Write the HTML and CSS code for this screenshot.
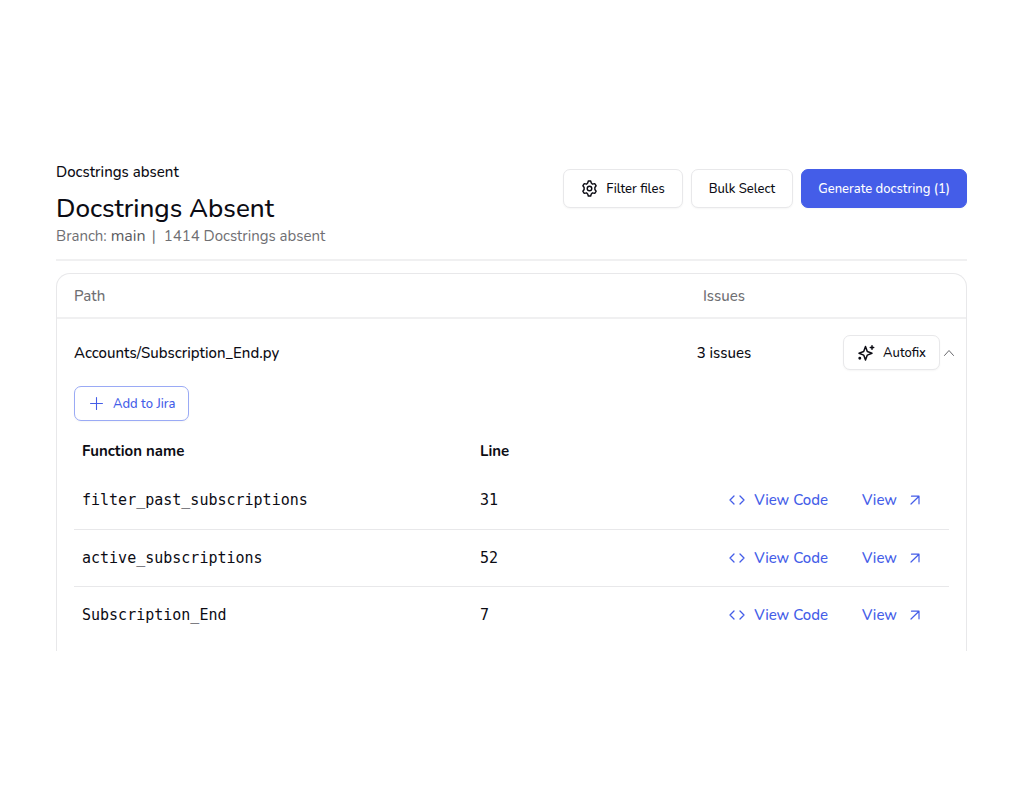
FILE: index.html
```html
<!DOCTYPE html>
<html lang="en">
<head>
  <meta charset="UTF-8">
  <meta name="viewport" content="width=device-width, initial-scale=1">
  <title>Docstrings Absent</title>
  <link rel="stylesheet" href="styles.css">
</head>
<body>

<!-- Shared icons -->
<svg class="sprite" aria-hidden="true">
  <symbol id="icon-code" viewBox="0 0 16 16"><path d="M5 4 1 8l4 4M11 4l4 4-4 4"/></symbol>
  <symbol id="icon-arrow" viewBox="0 0 10 10"><path d="M1.500 1.200H9v7.600M9 1.200 1 9"/></symbol>
</svg>

<main class="page">
  <header class="page-header">
    <div class="heading">
      <p class="crumb">Docstrings absent</p>
      <h1>Docstrings Absent</h1>
      <p class="meta">Branch: <span class="branch">main</span><span class="divider">|</span>1414 Docstrings absent</p>
    </div>
    <div class="actions">
      <button class="btn btn-filter" type="button">
        <svg class="icon-gear" viewBox="0 0 24 24"><circle cx="12" cy="12" r="3.2"/><path d="M9.600 3.900 10.300 1.500h3.400l.7 2.400 1.600 2 3.400-.8 1.900 3-1.700 2.500v2.800l1.700 2.500-1.900 3-3.400-.8-1.600 2-.7 2.400h-3.400l-.7-2.400-1.600-2-3.400.8-1.900-3 1.700-2.500v-2.800L2.700 8.100l1.900-3 3.400.8z"/></svg>
        Filter files
      </button>
      <button class="btn" type="button">Bulk Select</button>
      <button class="btn btn-primary" type="button">Generate docstring (1)</button>
    </div>
  </header>

  <section class="panel">
    <table class="files">
      <thead>
        <tr>
          <th>Path</th>
          <th class="col-issues">Issues</th>
          <th class="col-tools"></th>
        </tr>
      </thead>
      <tbody>
        <tr class="file-row">
          <td>Accounts/Subscription_End.py</td>
          <td class="col-issues">3 issues</td>
          <td class="col-tools">
            <div class="tools">
              <button class="btn btn-small" type="button">
                <svg class="icon-spark" viewBox="0 0 18 18"><path d="M8.500 2.500 10.300 7.500 15 9.300 10.300 11.100 8.500 16 6.700 11.100 2 9.300 6.700 7.500z"/><path d="M15 1.800v3.400M13.300 3.500h3.400"/><circle cx="2.800" cy="14.200" r=".7"/></svg>
                Autofix
              </button>
              <button class="toggle" type="button" aria-label="Collapse">
                <svg viewBox="0 0 12 12"><path d="M1.500 8.500 6 3.500l4.500 5"/></svg>
              </button>
            </div>
          </td>
        </tr>
      </tbody>
    </table>

    <div class="details">
      <button class="btn btn-small btn-jira" type="button">
        <svg class="icon-plus" viewBox="0 0 12 12"><path d="M6 .5v11M.5 6h11"/></svg>
        Add to Jira
      </button>

      <table class="functions">
        <thead>
          <tr>
            <th class="col-name">Function name</th>
            <th>Line</th>
            <th></th>
          </tr>
        </thead>
        <tbody>
          <tr>
            <td class="mono">filter_past_subscriptions</td>
            <td class="mono">31</td>
            <td>
              <div class="links">
                <a href="#"><svg class="icon-code"><use href="#icon-code"/></svg>View Code</a>
                <a href="#" class="view">View<svg class="icon-arrow"><use href="#icon-arrow"/></svg></a>
              </div>
            </td>
          </tr>
          <tr>
            <td class="mono">active_subscriptions</td>
            <td class="mono">52</td>
            <td>
              <div class="links">
                <a href="#"><svg class="icon-code"><use href="#icon-code"/></svg>View Code</a>
                <a href="#" class="view">View<svg class="icon-arrow"><use href="#icon-arrow"/></svg></a>
              </div>
            </td>
          </tr>
          <tr>
            <td class="mono">Subscription_End</td>
            <td class="mono">7</td>
            <td>
              <div class="links">
                <a href="#"><svg class="icon-code"><use href="#icon-code"/></svg>View Code</a>
                <a href="#" class="view">View<svg class="icon-arrow"><use href="#icon-arrow"/></svg></a>
              </div>
            </td>
          </tr>
        </tbody>
      </table>
    </div>
  </section>
</main>

</body>
</html>
```
FILE: styles.css
```css
:root {
  --text: #0c0c14;
  --muted: #6f6f73;
  --border: #e8e8ea;
  --primary: #445de8;
}

* {
  margin: 0;
  padding: 0;
  box-sizing: border-box;
}

body {
  background: #fff;
  color: var(--text);
  font-family: Nunito, Lato, sans-serif;
  font-size: 15px;
  font-weight: 500;
  line-height: 20px;
}

svg {
  fill: none;
  stroke: currentColor;
  stroke-linecap: round;
  stroke-linejoin: round;
  flex-shrink: 0;
}

.sprite {
  display: none;
}

.page {
  padding: 162px 57px 0 56px;
}

.page-header {
  display: flex;
  justify-content: space-between;
  align-items: flex-start;
  padding-bottom: 13px;
  border-bottom: 2px solid #f0f0f1;
}

h1 {
  margin: 10px 0 0;
  font-size: 26px;
  font-weight: 500;
  line-height: 34px;
}

.meta {
  color: var(--muted);
  font-weight: 400;
}

.branch {
  color: #5c5c60;
  font-size: 16px;
}

.divider {
  margin: 0 8px 0 6px;
}

.actions {
  display: flex;
  gap: 8px;
  padding-top: 7px;
}

.btn {
  display: flex;
  align-items: center;
  justify-content: center;
  height: 39px;
  padding: 0 17px;
  background: #fff;
  border: 1px solid var(--border);
  border-radius: 7px;
  box-shadow: 0 1px 2px rgba(0, 0, 0, 0.04);
  color: inherit;
  font-family: inherit;
  font-size: 13px;
  font-weight: 500;
  cursor: pointer;
}

.btn-filter {
  gap: 8px;
}

.btn-primary {
  padding: 0 16px;
  background: var(--primary);
  border-color: var(--primary);
  color: #fff;
}

.btn-small {
  gap: 8px;
  height: 35px;
  padding: 0 13px;
}

.btn-jira {
  gap: 10px;
  padding-left: 15px;
  border-color: #9aaaf5;
  color: var(--primary);
}

.icon-gear {
  width: 17px;
  height: 17px;
  stroke-width: 2;
}

.icon-spark {
  width: 18px;
  height: 18px;
  stroke-width: 1.5;
}

.icon-plus {
  width: 13px;
  height: 13px;
}

.panel {
  margin-top: 12px;
  border: 1px solid var(--border);
  border-bottom: 0;
  border-radius: 14px 14px 0 0;
}

table {
  width: 100%;
  border-collapse: collapse;
  text-align: left;
}

.files {
  table-layout: fixed;
}

.files th {
  height: 44px;
  padding-left: 17px;
  border-bottom: 2px solid #f0f0f1;
  color: var(--muted);
  font-weight: 500;
}

.files td {
  height: 68px;
  padding-left: 17px;
}

.files .col-issues {
  width: 182px;
  padding: 0;
  text-align: center;
}

.files .col-tools {
  width: 151px;
  padding: 0 11px 0 0;
}

.tools {
  display: flex;
  align-items: center;
  justify-content: flex-end;
  gap: 3px;
}

.toggle {
  width: 12px;
  height: 12px;
  background: none;
  border: 0;
  color: #68686c;
  cursor: pointer;
}

.toggle svg {
  display: block;
}

.details {
  padding: 0 17px 8px;
}

.functions {
  margin-top: 8px;
}

.functions th {
  height: 43px;
  padding-left: 8px;
  font-weight: 700;
}

.functions td {
  height: 57px;
  padding-left: 8px;
}

.functions .col-name {
  width: 398px;
}

.functions tbody tr + tr {
  border-top: 1px solid var(--border);
}

.functions .mono {
  font-family: Menlo, "DejaVu Sans Mono", monospace;
}

.links {
  display: flex;
  justify-content: flex-end;
  gap: 34px;
  padding-right: 29px;
}

.links a {
  display: flex;
  align-items: center;
  gap: 9px;
  color: var(--primary);
  text-decoration: none;
}

.links .view {
  gap: 13px;
}

.icon-code {
  width: 16px;
  height: 16px;
  stroke-width: 1.3;
}

.icon-arrow {
  width: 10px;
  height: 10px;
  stroke-width: 1.2;
}

@media (max-width: 760px) {
  .page-header {
    flex-direction: column;
  }

  .functions .col-name {
    width: auto;
  }
}
```
